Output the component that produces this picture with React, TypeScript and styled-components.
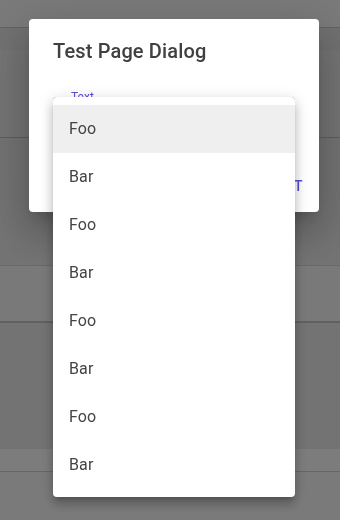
import React from 'react';
import styled, { createGlobalStyle } from 'styled-components';

const GlobalStyle = createGlobalStyle`
    html, body {
        margin: 0;
        padding: 0;
    }
    body {
        font-family: Roboto, 'Liberation Sans', sans-serif;
        -webkit-font-smoothing: antialiased;
    }
`;

const PRIMARY = '#5a4fdc';

const Page = styled.div`
    display: flex;
    flex-direction: column;
    height: 520px;
    overflow: hidden;
    background: #f4f4f4;
`;

const Row = styled.div<{ $h: number; $bg: string; $line?: string; $lineW?: number }>`
    flex: none;
    height: ${(p) => p.$h}px;
    background: ${(p) => p.$bg};
    border-bottom: ${(p) => (p.$line ? `${p.$lineW || 1}px solid ${p.$line}` : 'none')};
`;

const Backdrop = styled.div`
    position: fixed;
    inset: 0;
    background: rgba(0, 0, 0, 0.5);
`;

const Dialog = styled.div`
    position: fixed;
    top: 19px;
    left: 29px;
    width: 290px;
    height: 193px;
    display: flex;
    flex-direction: column;
    background: #ffffff;
    border-radius: 4px;
    box-shadow: 0px 11px 15px -7px rgba(0, 0, 0, 0.2), 0px 24px 38px 3px rgba(0, 0, 0, 0.14),
        0px 9px 46px 8px rgba(0, 0, 0, 0.12);
`;

const Title = styled.h2`
    margin: 0;
    padding: 16px 24px;
    font-size: 20px;
    font-weight: 500;
    line-height: 32px;
    letter-spacing: 0.15px;
    color: #404040;
`;

const Content = styled.div`
    padding: 14px 24px 7px;
`;

const Field = styled.div`
    position: relative;
    height: 56px;
    box-sizing: border-box;
    border: 2px solid ${PRIMARY};
    border-radius: 4px;
`;

const FieldLabel = styled.span`
    position: absolute;
    top: -8px;
    left: 12px;
    padding: 0 4px;
    background: #ffffff;
    font-size: 12px;
    line-height: 12px;
    color: ${PRIMARY};
`;

const Actions = styled.div`
    display: flex;
    justify-content: flex-end;
    padding: 8px;
`;

const TextButton = styled.button`
    height: 36px;
    padding: 0 8px;
    border: 0;
    background: transparent;
    font-family: inherit;
    font-size: 14px;
    font-weight: 500;
    letter-spacing: 0.4px;
    text-transform: uppercase;
    color: ${PRIMARY};
`;

const Menu = styled.ul`
    position: fixed;
    top: 97px;
    left: 53px;
    width: 242px;
    margin: 0;
    padding: 8px 0;
    list-style: none;
    background: #ffffff;
    border-radius: 4px;
    box-shadow: 0px 5px 5px -3px rgba(0, 0, 0, 0.2), 0px 8px 10px 1px rgba(0, 0, 0, 0.14),
        0px 3px 14px 2px rgba(0, 0, 0, 0.12);
`;

const MenuItem = styled.li<{ $selected?: boolean }>`
    display: flex;
    align-items: center;
    height: 48px;
    padding: 0 16px;
    font-size: 16px;
    line-height: 24px;
    letter-spacing: 0.15px;
    color: #444444;
    background: ${(p) => (p.$selected ? '#efefef' : 'transparent')};
`;

const options = ['Foo', 'Bar', 'Foo', 'Bar', 'Foo', 'Bar', 'Foo', 'Bar'];

export default function App() {
    return (
        <>
            <GlobalStyle />
            <Page>
                <Row $h={27} $bg="#f4f4f4" $line="#c4c4c4" />
                <Row $h={22} $bg="#e2e2e2" />
                <Row $h={87} $bg="#e8e8e8" $line="#bcbcbc" />
                <Row $h={127} $bg="#e6e6e6" $line="#d2d2d2" />
                <Row $h={55} $bg="#f2f2f2" $line="#c0c0c0" $lineW={2} />
                <Row $h={126} $bg="#e6e6e6" />
                <Row $h={22} $bg="#f8f8f8" $line="#cccccc" />
                <Row $h={60} $bg="#f4f4f4" />
            </Page>
            <Backdrop />
            <Dialog>
                <Title>Test Page Dialog</Title>
                <Content>
                    <Field>
                        <FieldLabel>Text</FieldLabel>
                    </Field>
                </Content>
                <Actions>
                    <TextButton>Submit</TextButton>
                </Actions>
            </Dialog>
            <Menu>
                {options.map((o, i) => (
                    <MenuItem key={i} $selected={i === 0}>
                        {o}
                    </MenuItem>
                ))}
            </Menu>
        </>
    );
}
